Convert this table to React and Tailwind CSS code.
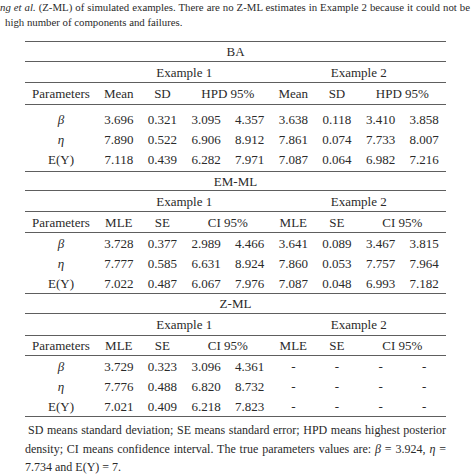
const sections = [
  {
    title: 'BA',
    cols: ['Mean', 'SD', 'HPD 95%'],
    rows: [
      ['β', '3.696', '0.321', '3.095', '4.357', '3.638', '0.118', '3.410', '3.858'],
      ['η', '7.890', '0.522', '6.906', '8.912', '7.861', '0.074', '7.733', '8.007'],
      ['E(Y)', '7.118', '0.439', '6.282', '7.971', '7.087', '0.064', '6.982', '7.216'],
    ],
    heights: ['h-[19px]', 'h-[20px]', 'h-[21px]'],
    body: 'pt-[4px] pb-[2px]',
  },
  {
    title: 'EM-ML',
    cols: ['MLE', 'SE', 'CI 95%'],
    rows: [
      ['β', '3.728', '0.377', '2.989', '4.466', '3.641', '0.089', '3.467', '3.815'],
      ['η', '7.777', '0.585', '6.631', '8.924', '7.860', '0.053', '7.757', '7.964'],
      ['E(Y)', '7.022', '0.487', '6.067', '7.976', '7.087', '0.048', '6.993', '7.182'],
    ],
    heights: ['h-[18px]', 'h-[20px]', 'h-[20px]'],
    body: '',
  },
  {
    title: 'Z-ML',
    cols: ['MLE', 'SE', 'CI 95%'],
    rows: [
      ['β', '3.729', '0.323', '3.096', '4.361', '-', '-', '-', '-'],
      ['η', '7.776', '0.488', '6.820', '8.732', '-', '-', '-', '-'],
      ['E(Y)', '7.021', '0.409', '6.218', '7.823', '-', '-', '-', '-'],
    ],
    heights: ['h-[19px]', 'h-[21px]', 'h-[19px]'],
    body: '',
  },
];

const grid = 'grid grid-cols-[72px_repeat(8,1fr)] items-center text-center';

function Rule() {
  return <div className="h-px bg-[#5e5e5e]" />;
}

function Label({ v }) {
  if (v === 'β' || v === 'η') return <span className="italic">{v}</span>;
  return v;
}

function Section({ s }) {
  return (
    <>
      <div className={`${s.heights[0]} flex items-center justify-center`}>{s.title}</div>
      <Rule />
      <div className={`${grid} ${s.heights[1]}`}>
        <div />
        <div className="col-span-4">Example 1</div>
        <div className="col-span-4">Example 2</div>
      </div>
      <Rule />
      <div className={`${grid} ${s.heights[2]}`}>
        <div>Parameters</div>
        <div>{s.cols[0]}</div>
        <div>{s.cols[1]}</div>
        <div className="col-span-2">{s.cols[2]}</div>
        <div>{s.cols[0]}</div>
        <div>{s.cols[1]}</div>
        <div className="col-span-2">{s.cols[2]}</div>
      </div>
      <Rule />
      <div className={s.body}>
        {s.rows.map((r) => (
          <div key={r[0]} className={`${grid} h-[20px]`}>
            {r.map((c, i) => (
              <div key={i}>{i === 0 ? <Label v={c} /> : c}</div>
            ))}
          </div>
        ))}
      </div>
      <Rule />
    </>
  );
}

export default function App() {
  return (
    <div className="w-[474px] h-[474px] overflow-hidden bg-white text-[#2a2a2a] font-['Liberation_Serif','Times_New_Roman',serif]">
      <div className="text-[10.8px] leading-[15px] whitespace-nowrap">
        <div className="w-[470px] text-justify [text-align-last:justify]">
          <span className="italic">ng et al.</span> (Z-ML) of simulated examples. There are no Z-ML estimates in Example 2 because it could not be
        </div>
        <div className="pl-[5px]">high number of components and failures.</div>
      </div>

      <div className="mt-[11px] mx-[25px] w-[421px] text-[13px] leading-none">
        <Rule />
        {sections.map((s) => (
          <Section key={s.title} s={s} />
        ))}
      </div>

      <div className="mt-[4px] ml-[25px] w-[421px] text-[12px] leading-[18.5px] whitespace-nowrap">
        <div className="pl-[3px] text-justify [text-align-last:justify]">
          SD means standard deviation; SE means standard error; HPD means highest posterior
        </div>
        <div className="text-justify [text-align-last:justify]">
          density; CI means confidence interval. The true parameters values are: <span className="italic">β</span> = 3.924, <span className="italic">η</span> =
        </div>
        <div>7.734 and E(Y) = 7.</div>
      </div>
    </div>
  );
}
